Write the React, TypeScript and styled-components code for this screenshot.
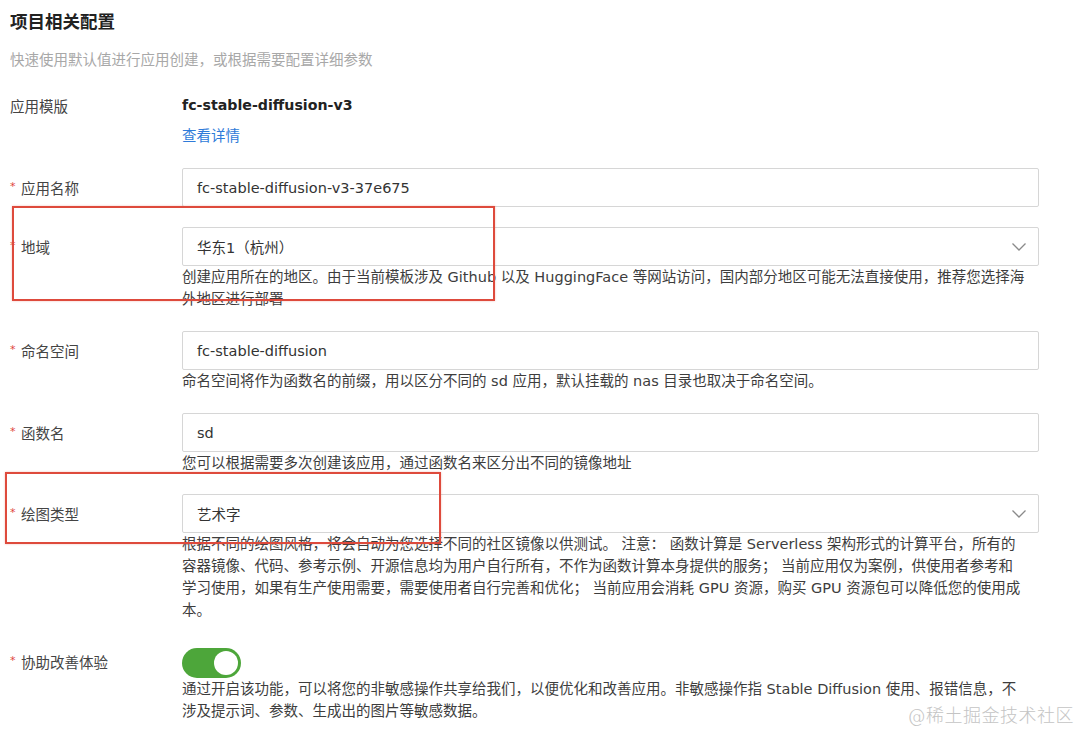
import React from 'react'
import styled, { createGlobalStyle } from 'styled-components'

const GlobalStyle = createGlobalStyle`
  html, body {
    margin: 0;
    padding: 0;
    background: #fff;
  }
  body {
    font-family: 'DejaVu Sans', 'Noto Sans CJK SC', sans-serif;
    color: #333;
  }
`

const Page = styled.div`
  position: relative;
  width: 1080px;
  height: 746px;
  box-sizing: border-box;
  padding: 10px 41px 0 10px;
  overflow: hidden;
  background: #fff;
`

const Title = styled.div`
  font-size: 17.5px;
  line-height: 24px;
  font-weight: 700;
  color: #222;
`

const Subtitle = styled.div`
  margin-top: 15px;
  font-size: 14.5px;
  line-height: 22px;
  color: #a8a8a8;
`

const FormItem = styled.div<{ $mt?: number; $mb?: number }>`
  position: relative;
  display: grid;
  grid-template-columns: 172px 1fr;
  margin-top: ${p => p.$mt ?? 0}px;
  margin-bottom: ${p => p.$mb ?? 21}px;
`

const Label = styled.div<{ $h?: number }>`
  display: flex;
  align-items: center;
  height: ${p => p.$h ?? 39}px;
  font-size: 14.5px;
  color: #444;
  white-space: nowrap;
`

const Required = styled.span`
  color: #e0443c;
  font-size: 11px;
  width: 11px;
  line-height: 1;
  margin-top: -2px;
`

const Control = styled.div`
  min-width: 0;
`

const StaticValue = styled.div`
  font-size: 14.2px;
  line-height: 22px;
  font-weight: 700;
  color: #222;
`

const DetailLink = styled.a`
  display: block;
  margin-top: 9px;
  font-size: 14.5px;
  line-height: 22px;
  color: #2f7bd9;
  text-decoration: none;
  cursor: pointer;
`

const InputBox = styled.div`
  display: flex;
  align-items: center;
  justify-content: space-between;
  height: 39px;
  box-sizing: border-box;
  padding: 0 10px 0 14px;
  border: 1px solid #d6d6d6;
  border-radius: 2px;
  background: #fff;
  font-size: 14.5px;
  color: #333;
`

const Chevron = styled.svg`
  width: 16px;
  height: 10px;
  margin-right: 1px;
`

const Help = styled.div`
  padding-right: 12px;
  font-size: 14.5px;
  line-height: 22px;
  color: #3d3d3d;
`

const Switch = styled.div<{ $on: boolean }>`
  position: relative;
  width: 59px;
  height: 30px;
  border-radius: 15px;
  background: ${p => (p.$on ? '#4da63a' : '#ccc')};
`

const Knob = styled.span`
  position: absolute;
  top: 3px;
  right: 3px;
  width: 24px;
  height: 24px;
  border-radius: 50%;
  background: #fff;
`

const Highlight = styled.div`
  position: absolute;
  border: 2px solid #de4a3c;
  box-shadow: 0 0 2px rgba(222, 74, 60, 0.35);
  pointer-events: none;
`

const Watermark = styled.div`
  position: absolute;
  right: 6px;
  bottom: 18px;
  font-size: 18px;
  line-height: 24px;
  color: #c4c4c4;
  font-weight: 300;
  letter-spacing: 0.5px;
`

const Select: React.FC<{ value: string }> = ({ value }) => (
  <InputBox>
    <span>{value}</span>
    <Chevron viewBox="0 0 16 10">
      <polyline points="1.5,1.5 8,8 14.5,1.5" fill="none" stroke="#8a8a8a" strokeWidth="1.3" />
    </Chevron>
  </InputBox>
)

const Req: React.FC<{ children: React.ReactNode; h?: number }> = ({ children, h }) => (
  <Label $h={h}>
    <Required>*</Required>
    {children}
  </Label>
)

export default function App() {
  return (
    <Page>
      <GlobalStyle />
      <Title>项目相关配置</Title>
      <Subtitle>快速使用默认值进行应用创建，或根据需要配置详细参数</Subtitle>

      <FormItem $mt={23}>
        <Label $h={22}>应用模版</Label>
        <Control>
          <StaticValue>fc-stable-diffusion-v3</StaticValue>
          <DetailLink>查看详情</DetailLink>
        </Control>
      </FormItem>

      <FormItem $mb={20}>
        <Req>应用名称</Req>
        <Control>
          <InputBox>fc-stable-diffusion-v3-37e675</InputBox>
        </Control>
      </FormItem>

      <FormItem $mb={21}>
        <Highlight style={{ left: 2, top: -21, width: 479, height: 91 }} />
        <Req>地域</Req>
        <Control>
          <Select value="华东1（杭州）" />
          <Help>
            创建应用所在的地区。由于当前模板涉及 Github 以及 HuggingFace 等网站访问，国内部分地区可能无法直接使用，推荐您选择海外地区进行部署
          </Help>
        </Control>
      </FormItem>

      <FormItem $mb={21}>
        <Req>命名空间</Req>
        <Control>
          <InputBox>fc-stable-diffusion</InputBox>
          <Help>命名空间将作为函数名的前缀，用以区分不同的 sd 应用，默认挂载的 nas 目录也取决于命名空间。</Help>
        </Control>
      </FormItem>

      <FormItem $mb={20}>
        <Req>函数名</Req>
        <Control>
          <InputBox>sd</InputBox>
          <Help>您可以根据需要多次创建该应用，通过函数名来区分出不同的镜像地址</Help>
        </Control>
      </FormItem>

      <FormItem $mb={27}>
        <Highlight style={{ left: -5, top: -22, width: 432, height: 68 }} />
        <Req>绘图类型</Req>
        <Control>
          <Select value="艺术字" />
          <Help>
            根据不同的绘图风格，将会自动为您选择不同的社区镜像以供测试。 注意： 函数计算是 Serverless 架构形式的计算平台，所有的容器镜像、代码、参考示例、开源信息均为用户自行所有，不作为函数计算本身提供的服务； 当前应用仅为案例，供使用者参考和学习使用，如果有生产使用需要，需要使用者自行完善和优化； 当前应用会消耗 GPU 资源，购买 GPU 资源包可以降低您的使用成本。
          </Help>
        </Control>
      </FormItem>

      <FormItem>
        <Req h={26}>协助改善体验</Req>
        <Control>
          <Switch $on>
            <Knob />
          </Switch>
          <Help>
            通过开启该功能，可以将您的非敏感操作共享给我们，以便优化和改善应用。非敏感操作指 Stable Diffusion 使用、报错信息，不涉及提示词、参数、生成出的图片等敏感数据。
          </Help>
        </Control>
      </FormItem>

      <Watermark>@稀土掘金技术社区</Watermark>
    </Page>
  )
}
